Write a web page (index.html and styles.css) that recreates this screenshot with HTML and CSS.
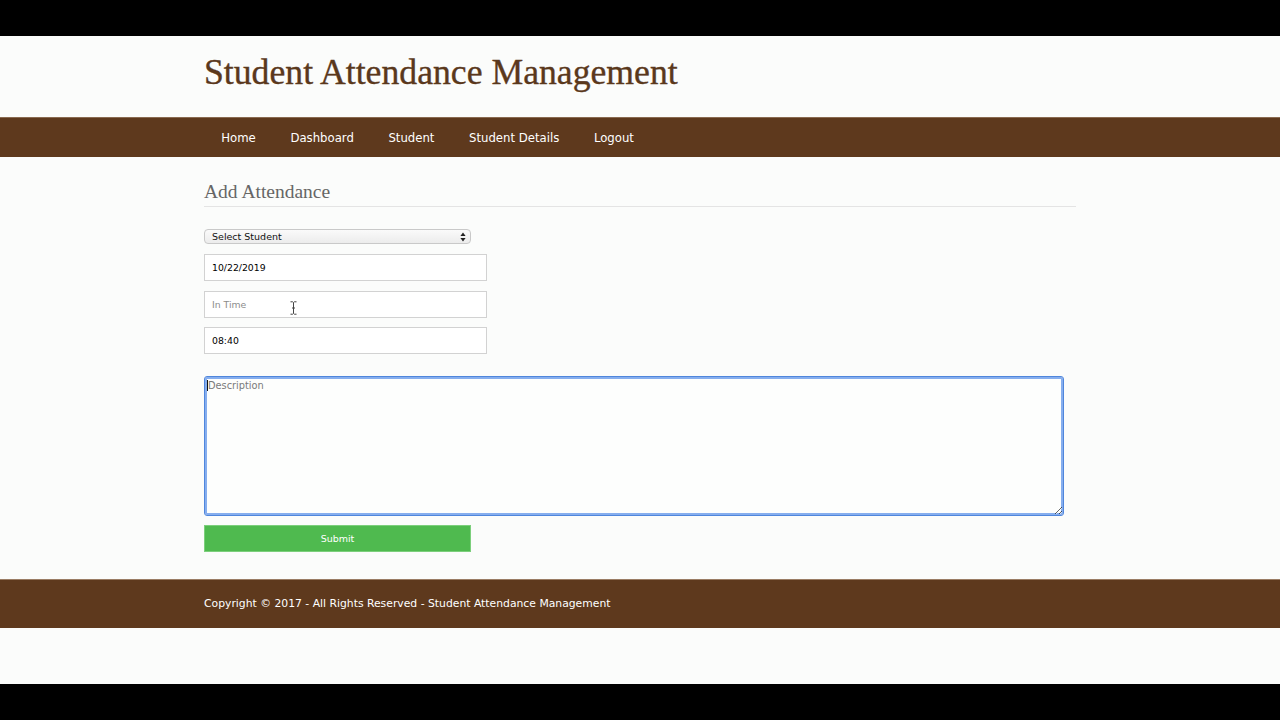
FILE: index.html
```html
<!DOCTYPE html>
<html lang="en">
<head>
<meta charset="utf-8">
<title>Student Attendance Management</title>
<link rel="stylesheet" href="styles.css">
</head>
<body>
<div class="page">
  <header class="site-header">
    <div class="container">
      <h1 class="brand">Student Attendance Management</h1>
    </div>
  </header>
  <nav class="site-nav">
    <div class="container nav-list">
      <a class="nav-link" href="#">Home</a>
      <a class="nav-link" href="#">Dashboard</a>
      <a class="nav-link" href="#">Student</a>
      <a class="nav-link" href="#">Student Details</a>
      <a class="nav-link" href="#">Logout</a>
    </div>
  </nav>
  <main class="site-main">
    <div class="container">
      <h2 class="section-title">Add Attendance</h2>
      <form class="att-form">
        <div class="select-box">
          <span class="select-label">Select Student</span>
          <svg class="select-arrows" width="6" height="10" viewBox="0 0 6 10"><path d="M3 0.5 L5.6 4 H0.4 Z M3 9.5 L5.6 6 H0.4 Z" fill="#222"/></svg>
        </div>
        <div class="field"><input class="text-input" type="text" value="10/22/2019"></div>
        <div class="field cursor-host">
          <input class="text-input" type="text" placeholder="In Time">
          <svg class="ibeam" width="7" height="14" viewBox="0 0 7 14"><path d="M0.5 0.8 H2.6 L3.5 1.6 L4.4 0.8 H6.5 M3.5 1.6 V12.4 M0.5 13.2 H2.6 L3.5 12.4 L4.4 13.2 H6.5 M2 7 H5" stroke="#444" stroke-width="1" fill="none"/></svg>
        </div>
        <div class="field"><input class="text-input" type="text" value="08:40"></div>
        <div class="area-wrap">
          <textarea class="desc" placeholder="Description"></textarea>
          <span class="caret"></span>
        </div>
        <button class="submit-btn" type="button">Submit</button>
      </form>
    </div>
  </main>
  <footer class="site-footer">
    <div class="container">
      <p class="copy">Copyright © 2017 - All Rights Reserved - Student Attendance Management</p>
    </div>
  </footer>
</div>
</body>
</html>
```
FILE: styles.css
```css
* { box-sizing: border-box; }
html, body { margin: 0; padding: 0; }
body {
  background: #000;
  padding: 36px 0;
  font-family: "DejaVu Sans", Verdana, sans-serif;
}
.page {
  height: 648px;
  background: #fbfcfb;
  display: flex;
  flex-direction: column;
}
.container {
  width: 872px;
  margin: 0 auto;
}
.site-header {
  height: 81px;
}
.brand {
  margin: 0;
  padding-top: 18px;
  font-family: "Liberation Serif", Georgia, serif;
  font-weight: normal;
  font-size: 35.7px;
  line-height: 36px;
  color: #5a381c;
  -webkit-text-stroke: 0.35px #5a381c;
}
.site-nav {
  height: 40px;
  background: #5e391d;
  border-top: 1px solid #8a6a50;
}
.nav-list {
  display: flex;
  align-items: center;
  height: 39px;
}
.nav-link {
  color: #fff;
  text-decoration: none;
  font-size: 11.7px;
  padding: 0 17.3px;
}
.site-main {
  height: 422px;
  padding-top: 25px;
}
.section-title {
  margin: 0;
  font-family: "Liberation Serif", Georgia, serif;
  font-weight: normal;
  font-size: 19.5px;
  line-height: 20px;
  color: #666;
  padding-bottom: 4px;
  border-bottom: 1px solid #e4e4e4;
}
.att-form {
  padding-top: 22px;
  display: flex;
  flex-direction: column;
  align-items: flex-start;
}
.select-box {
  width: 267px;
  height: 15px;
  border: 1px solid #c9c9c9;
  border-radius: 4px;
  background: linear-gradient(#fafafa, #ececec);
  display: flex;
  align-items: center;
  justify-content: space-between;
  padding: 0 4px 0 7px;
  margin-bottom: 10px;
}
.select-label {
  font-size: 9.5px;
  color: #111;
}
.select-arrows { display: block; }
.field {
  margin-bottom: 9.5px;
}
.cursor-host { position: relative; }
.text-input {
  display: block;
  width: 283px;
  height: 27px;
  border: 1px solid #d2d2d2;
  background: #fff;
  padding: 0 7px;
  font-family: "DejaVu Sans", Verdana, sans-serif;
  font-size: 9.3px;
  color: #000;
  outline: none;
}
.text-input::placeholder { color: #8c8c8c; }
.ibeam {
  position: absolute;
  left: 86px;
  top: 10px;
}
.area-wrap {
  position: relative;
  margin-top: 12px;
  margin-bottom: 9px;
}
.desc {
  display: block;
  width: 860px;
  height: 140px;
  border: 1px solid #4f86dc;
  box-shadow: inset 0 0 0 2px #86aeee;
  border-radius: 3px;
  background: #fdfefd;
  padding: 3px 3px;
  font-family: "DejaVu Sans", Verdana, sans-serif;
  font-size: 9.8px;
  outline: none;
  resize: both;
}
.desc::placeholder { color: #7a7a7a; }
.caret {
  position: absolute;
  left: 3px;
  top: 4px;
  width: 1px;
  height: 11px;
  background: #111;
}
.submit-btn {
  width: 267px;
  height: 27px;
  border: 1px solid #7ccf7c;
  background: #4fba4f;
  color: #fff;
  font-family: "DejaVu Sans", Verdana, sans-serif;
  font-size: 9.5px;
  padding: 0;
}
.site-footer {
  height: 49px;
  background: #5e391d;
  border-top: 1px solid #9a7c64;
  display: flex;
  align-items: center;
}
.copy {
  margin: 0;
  color: #fff;
  font-size: 10.8px;
  padding-bottom: 2px;
}
```
